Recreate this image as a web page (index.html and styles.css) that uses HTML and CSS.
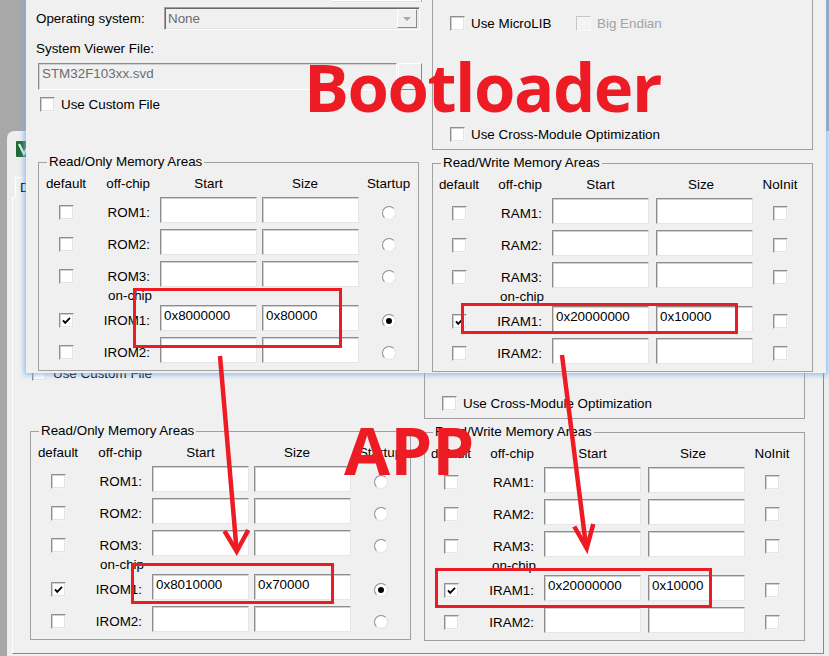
FILE: index.html
```html
<!DOCTYPE html>
<html lang="en">
<head>
    <meta charset="UTF-8">
    <title>Options for Target</title>
    <link rel="stylesheet" href="styles.css">
</head>
<body>

<!-- APP project, window behind -->
<div class="win app">
    <div class="cap">
        <svg class="logo" width="16" height="16" viewBox="0 0 16 16"><rect width="16" height="16" rx="1" fill="#1f6b36"/><path d="M3 3l5 10 5-10" fill="none" stroke="#e6f2e4" stroke-width="2.2"/></svg>
    </div>
    <div class="tabs"><span class="tab">Device</span></div>
    <div class="page">
        <div class="opts">
            <div class="col">
                <div class="stub"></div>
                <div class="line os">
                    <span class="name">Operating system:</span>
                    <div class="combo"><span>None</span><i class="drop"></i></div>
                </div>
                <div class="lbl">System Viewer File:</div>
                <div class="line file">
                    <div class="ed off">STM32F103xx.svd</div>
                    <div class="btn"></div>
                </div>
                <div class="chk"><span class="cb"></span>Use Custom File</div>
                <fieldset class="mem ro">
                    <legend>Read/Only Memory Areas</legend>
                    <div class="mrow head"><span class="c">default</span><span class="r">off-chip</span><span class="c">Start</span><span class="c sz">Size</span><span class="c">Startup</span></div>
                    <div class="mrow"><span class="cb"></span><span class="r">ROM1:</span><span class="ed"></span><span class="ed"></span><span class="rd"></span></div>
                    <div class="mrow"><span class="cb"></span><span class="r">ROM2:</span><span class="ed"></span><span class="ed"></span><span class="rd"></span></div>
                    <div class="mrow"><span class="cb"></span><span class="r">ROM3:</span><span class="ed"></span><span class="ed"></span><span class="rd"></span></div>
                    <div class="mrow chip"><span></span><span class="r">on-chip</span></div>
                    <div class="mrow"><span class="cb on"><svg viewBox="0 0 13 13"><path d="M3 6.3l2.2 2.6L10 3.8"/></svg></span><span class="r">IROM1:</span><span class="ed">0x8010000</span><span class="ed">0x70000</span><span class="rd on"></span></div>
                    <div class="mrow last"><span class="cb"></span><span class="r">IROM2:</span><span class="ed"></span><span class="ed"></span><span class="rd"></span></div>
                </fieldset>
            </div>
            <div class="col">
                <div class="grp">
                    <div class="line"><div class="chk lib"><span class="cb"></span>Use MicroLIB</div><div class="chk dis"><span class="cb"></span>Big Endian</div></div>
                    <div class="chk cross"><span class="cb"></span>Use Cross-Module Optimization</div>
                </div>
                <fieldset class="mem rw">
                    <legend>Read/Write Memory Areas</legend>
                    <div class="mrow head"><span class="c">default</span><span class="r">off-chip</span><span class="c">Start</span><span class="c">Size</span><span class="c">NoInit</span></div>
                    <div class="mrow"><span class="cb"></span><span class="r">RAM1:</span><span class="ed"></span><span class="ed"></span><span class="cb"></span></div>
                    <div class="mrow"><span class="cb"></span><span class="r">RAM2:</span><span class="ed"></span><span class="ed"></span><span class="cb"></span></div>
                    <div class="mrow"><span class="cb"></span><span class="r">RAM3:</span><span class="ed"></span><span class="ed"></span><span class="cb"></span></div>
                    <div class="mrow chip"><span></span><span class="r">on-chip</span></div>
                    <div class="mrow"><span class="cb on"><svg viewBox="0 0 13 13"><path d="M3 6.3l2.2 2.6L10 3.8"/></svg></span><span class="r">IRAM1:</span><span class="ed">0x20000000</span><span class="ed">0x10000</span><span class="cb"></span></div>
                    <div class="mrow last"><span class="cb"></span><span class="r">IRAM2:</span><span class="ed"></span><span class="ed"></span><span class="cb"></span></div>
                </fieldset>
            </div>
        </div>
    </div>
</div>

<!-- Bootloader project, window in front -->
<div class="win boot">
    <div class="opts">
        <div class="col">
            <div class="stub"></div>
            <div class="line os">
                <span class="name">Operating system:</span>
                <div class="combo"><span>None</span><i class="drop"></i></div>
            </div>
            <div class="lbl">System Viewer File:</div>
            <div class="line file">
                <div class="ed off">STM32F103xx.svd</div>
                <div class="btn"></div>
            </div>
            <div class="chk"><span class="cb"></span>Use Custom File</div>
            <fieldset class="mem ro">
                <legend>Read/Only Memory Areas</legend>
                <div class="mrow head"><span class="c">default</span><span class="r">off-chip</span><span class="c">Start</span><span class="c sz">Size</span><span class="c">Startup</span></div>
                <div class="mrow"><span class="cb"></span><span class="r">ROM1:</span><span class="ed"></span><span class="ed"></span><span class="rd"></span></div>
                <div class="mrow"><span class="cb"></span><span class="r">ROM2:</span><span class="ed"></span><span class="ed"></span><span class="rd"></span></div>
                <div class="mrow"><span class="cb"></span><span class="r">ROM3:</span><span class="ed"></span><span class="ed"></span><span class="rd"></span></div>
                <div class="mrow chip"><span></span><span class="r">on-chip</span></div>
                <div class="mrow"><span class="cb on"><svg viewBox="0 0 13 13"><path d="M3 6.3l2.2 2.6L10 3.8"/></svg></span><span class="r">IROM1:</span><span class="ed">0x8000000</span><span class="ed">0x80000</span><span class="rd on"></span></div>
                <div class="mrow last"><span class="cb"></span><span class="r">IROM2:</span><span class="ed"></span><span class="ed"></span><span class="rd"></span></div>
            </fieldset>
        </div>
        <div class="col">
            <div class="grp">
                <div class="line"><div class="chk lib"><span class="cb"></span>Use MicroLIB</div><div class="chk dis"><span class="cb"></span>Big Endian</div></div>
                <div class="chk cross"><span class="cb"></span>Use Cross-Module Optimization</div>
            </div>
            <fieldset class="mem rw">
                <legend>Read/Write Memory Areas</legend>
                <div class="mrow head"><span class="c">default</span><span class="r">off-chip</span><span class="c">Start</span><span class="c">Size</span><span class="c">NoInit</span></div>
                <div class="mrow"><span class="cb"></span><span class="r">RAM1:</span><span class="ed"></span><span class="ed"></span><span class="cb"></span></div>
                <div class="mrow"><span class="cb"></span><span class="r">RAM2:</span><span class="ed"></span><span class="ed"></span><span class="cb"></span></div>
                <div class="mrow"><span class="cb"></span><span class="r">RAM3:</span><span class="ed"></span><span class="ed"></span><span class="cb"></span></div>
                <div class="mrow chip"><span></span><span class="r">on-chip</span></div>
                <div class="mrow"><span class="cb on"><svg viewBox="0 0 13 13"><path d="M3 6.3l2.2 2.6L10 3.8"/></svg></span><span class="r">IRAM1:</span><span class="ed">0x20000000</span><span class="ed">0x10000</span><span class="cb"></span></div>
                <div class="mrow last"><span class="cb"></span><span class="r">IRAM2:</span><span class="ed"></span><span class="ed"></span><span class="cb"></span></div>
            </fieldset>
        </div>
    </div>
</div>

<!-- red marks drawn on top -->
<div class="box b1"></div>
<div class="box b2"></div>
<div class="box b3"></div>
<div class="box b4"></div>

<svg class="arrows" width="829" height="656" viewBox="0 0 829 656">
    <g fill="none" stroke="#ed1c24" stroke-width="4.5">
        <path d="M220 356L236.5 549"/>
        <path d="M224.5 531L236.7 551.5 248.3 530"/>
        <path d="M562 355L586 546"/>
        <path d="M574.3 526.5L586.7 548.3 593.3 524"/>
    </g>
</svg>

<div class="tag t-boot">Bootloader</div>
<div class="tag t-app">APP</div>

</body>
</html>
```

FILE: styles.css
```css
* {
    box-sizing: border-box;
}

body {
    margin: 0;
    width: 829px;
    height: 656px;
    overflow: hidden;
    position: relative;
    background: #a8a8a8;
    color: #000;
    font: 13.4px/16px "Liberation Sans", Arial, sans-serif;
}

/* windows */
.win {
    position: absolute;
    background: #f0f0f0;
}

.app {
    left: 7px;
    top: 131px;
    right: 0;
    bottom: 0;
    border-top-left-radius: 7px;
    background: #eeeeee;
}

.boot {
    left: 26px;
    top: 0;
    width: 800px;
    height: 373px;
    overflow: hidden;
    box-shadow: 0 0 5px 2px rgba(120, 172, 236, 0.75);
}

.boot .opts {
    margin-left: 10px;
}

.cap {
    height: 46px;
    padding: 10px 0 0 9px;
}

.logo {
    display: block;
}

.tabs {
    height: 20px;
    padding-left: 8px;
}

.tab {
    display: inline-block;
    height: 21px;
    padding: 0 4px;
    line-height: 20px;
    border: 1px solid #a0a0a0;
    border-color: #fff #a0a0a0 transparent #fff;
    background: #f0f0f0;
}

.page {
    margin-left: 5px;
    width: 812px;
    height: 457px;
    padding: 71px 0 0 15px;
    border: 1px solid;
    border-color: #fff #8a8a8a #8a8a8a #fff;
    background: #f0f0f0;
}

/* options panel */
.opts {
    display: grid;
    grid-template-columns: 386px 381px;
    column-gap: 10px;
    align-items: start;
}

.col {
    display: flex;
    flex-direction: column;
}

.stub {
    margin-left: 296px;
    width: 90px;
    height: 2px;
    background: #fff;
    border-right: 1px solid #a0a0a0;
    border-bottom: 1px solid #e3e3e3;
}

.line {
    display: flex;
    align-items: center;
}

.os {
    margin-top: 5px;
    height: 23px;
}

.os .name {
    width: 128px;
}

.combo {
    display: flex;
    align-items: center;
    width: 256px;
    height: 23px;
    padding: 1px 1px 1px 3px;
    color: #6d6d6d;
    border: 1px solid;
    border-color: #a0a0a0 #fff #fff #a0a0a0;
    box-shadow: inset 1px 1px 0 #696969, inset -1px -1px 0 #e3e3e3;
}

.combo span {
    flex: 1;
    padding-top: 1px;
}

.drop {
    position: relative;
    width: 20px;
    height: 19px;
    margin-right: 1px;
    border: 1px solid;
    border-color: #fff #8a8a8a #8a8a8a #fff;
    background: #f0f0f0;
}

/* small arrow on the combo button */
.drop::after {
    content: "";
    position: absolute;
    left: 5px;
    top: 7px;
    border: 4px solid transparent;
    border-top: 4px solid #a8a8a8;
    border-bottom: 0;
}

.lbl {
    margin-top: 11px;
}

.file {
    margin-top: 6px;
    height: 27px;
}

.btn {
    margin-left: 1px;
    width: 24px;
    height: 27px;
    border: 1px solid;
    border-color: #fff #8a8a8a #8a8a8a #fff;
}

/* edit fields */
.ed {
    display: block;
    width: 97px;
    height: 26px;
    padding: 2px 3px;
    white-space: nowrap;
    background: #fff;
    border: 1px solid;
    border-color: #8d8d8d #e6e6e6 #e6e6e6 #8d8d8d;
    box-shadow: inset 1px 1px 0 #d0d0d0;
}

.ed.off {
    margin-left: 2px;
    width: 359px;
    height: 27px;
    background: #f0f0f0;
    color: #6d6d6d;
    border-color: #8d8d8d #fff #fff #8d8d8d;
}

/* check boxes and radios */
.chk {
    display: flex;
    align-items: center;
    gap: 6px;
    height: 15px;
}

.col > .chk {
    margin-top: 7px;
    padding-left: 4px;
}

.cb {
    display: block;
    width: 15px;
    height: 15px;
    background: #fff;
    border: 1px solid;
    border-color: #8f8f8f #f4f4f4 #f4f4f4 #8f8f8f;
    box-shadow: inset 1px 1px 0 #cfcfcf, inset -1px -1px 0 #e3e3e3;
}

.cb svg {
    display: block;
    width: 13px;
    height: 13px;
}

.cb path {
    fill: none;
    stroke: #000;
    stroke-width: 1.8;
}

.dis {
    color: #a3a3a3;
}

.dis .cb {
    background: #f4f4f4;
    border-color: #c8c8c8 #fafafa #fafafa #c8c8c8;
    box-shadow: none;
}

.rd {
    display: flex;
    align-items: center;
    justify-content: center;
    width: 14px;
    height: 14px;
    border-radius: 50%;
    background: #fff;
    border: 1px solid;
    border-color: #8d8d8d #e3e3e3 #e3e3e3 #8d8d8d;
}

.rd.on::after {
    content: "";
    width: 6px;
    height: 6px;
    border-radius: 50%;
    background: #000;
}

/* option group on the right */
.grp {
    height: 150px;
    padding: 16px 0 0 17px;
    border: 1px solid #a0a0a0;
    border-top: 0;
}

.lib {
    width: 126px;
}

.grp .cross {
    margin-top: 96px;
}

/* memory area groups */
fieldset.mem {
    --cols: 42px 73px 97px 102px 59px;
    min-width: 0;
    width: 381px;
    margin: 0;
    padding: 0 0 7px 6px;
    border: 1px solid #a0a0a0;
}

fieldset.rw {
    --cols: 40px 73px 97px 104px 54px;
    margin-top: 5px;
}

.col > .ro {
    margin: 42px 0 0 2px;
}

.mem legend {
    margin-left: 2px;
    padding: 0 2px;
    line-height: 16px;
}

.mrow {
    display: grid;
    grid-template-columns: var(--cols);
    align-items: center;
    height: 26px;
    margin-bottom: 6px;
}

.mrow.head {
    height: 27px;
    margin-bottom: 0;
}

.mrow > .c,
.mrow > .cb,
.mrow > .rd {
    justify-self: center;
}

.mrow > .r {
    justify-self: end;
    padding-right: 10px;
}

.mrow:not(.head) > .cb,
.mrow:not(.head) > .rd,
.mrow:not(.head) > .r {
    margin-top: 5px;
}

.mrow > .ed + .ed {
    justify-self: end;
}

.ro .sz {
    padding-right: 6px;
}

.mrow.chip {
    height: 18px;
    margin-top: -6px;
    margin-bottom: 0;
}

.mrow.chip > .r {
    margin-top: 0;
    padding-right: 8px;
}

.mrow.last {
    margin-bottom: 0;
}

/* red marks */
.box {
    position: absolute;
    border: 3px solid #ed1c24;
}

.b1 { left: 133px; top: 288px; width: 209px; height: 60px; }
.b2 { left: 461px; top: 303px; width: 277px; height: 31px; }
.b3 { left: 131px; top: 563px; width: 203px; height: 41px; }
.b4 { left: 435px; top: 568px; width: 277px; height: 40px; }

.arrows {
    position: absolute;
    left: 0;
    top: 0;
}

.tag {
    position: absolute;
    color: #ed1c24;
    font-family: "Open Sans", "Noto Sans", sans-serif;
    font-weight: 700;
    font-size: 67px;
    line-height: 67px;
    white-space: nowrap;
}

.t-boot {
    left: 304px;
    top: 53px;
    letter-spacing: -1.5px;
}

.t-app {
    left: 344px;
    top: 416px;
}
```
